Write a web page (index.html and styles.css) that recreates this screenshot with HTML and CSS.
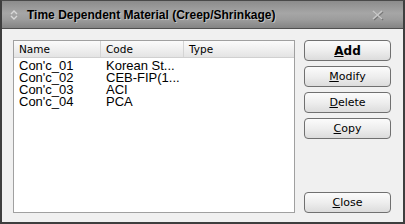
FILE: index.html
```html
<!DOCTYPE html>
<html>
<head>
<meta charset="utf-8">
<link rel="stylesheet" href="styles.css">
</head>
<body>
<div class="window">
  <div class="titlebar">
    <svg class="ticon" width="8" height="10" viewBox="0 0 8 10">
      <path d="M1 4 L4 1 L7 4" fill="none" stroke="#d8d8d8" stroke-width="1.4"/>
      <path d="M1 6 L4 9 L7 6" fill="none" stroke="#d8d8d8" stroke-width="1.4"/>
    </svg>
    <span class="title">Time Dependent Material (Creep/Shrinkage)</span>
    <svg class="close-x" width="11" height="10" viewBox="0 0 11 10">
      <path d="M1 1 L10 9 M10 1 L1 9" stroke="#c8c8c8" stroke-width="1.6"/>
    </svg>
  </div>
  <div class="content">
    <div class="listbox">
      <div class="header">
        <div class="hcell c1">Name</div>
        <div class="hcell c2">Code</div>
        <div class="hcell c3">Type</div>
      </div>
      <div class="rows">
        <div class="row"><span class="c1">Con'c_01</span><span class="c2">Korean St...</span><span class="c3"></span></div>
        <div class="row"><span class="c1">Con'c_02</span><span class="c2">CEB-FIP(1...</span><span class="c3"></span></div>
        <div class="row"><span class="c1">Con'c_03</span><span class="c2">ACI</span><span class="c3"></span></div>
        <div class="row"><span class="c1">Con'c_04</span><span class="c2">PCA</span><span class="c3"></span></div>
      </div>
    </div>
    <div class="buttons">
      <button class="btn bold"><u>A</u>dd</button>
      <button class="btn"><u>M</u>odify</button>
      <button class="btn"><u>D</u>elete</button>
      <button class="btn"><u>C</u>opy</button>
      <div class="spacer"></div>
      <button class="btn"><u>C</u>lose</button>
    </div>
  </div>
</div>
</body>
</html>
```

FILE: styles.css
```css
html, body {
  margin: 0;
  padding: 0;
  background: #f0f0f0;
}
.window {
  width: 405px;
  height: 224px;
  box-sizing: border-box;
  border: 2px solid #3e3e3e;
  border-top: 1px solid #4a4a4a;
  display: flex;
  flex-direction: column;
  background: #f0f0f0;
  font-family: "Liberation Sans", Arial, sans-serif;
}
.titlebar {
  height: 27px;
  border-bottom: 1px solid #505050;
  background: linear-gradient(#8c8c8c, #a6a6a6 45%, #9c9c9c 70%, #848484);
  display: flex;
  align-items: center;
  padding-left: 8px;
  padding-right: 20px;
}
.ticon {
  margin-right: 9px;
}
.title {
  font-weight: bold;
  font-size: 12px;
  color: #000;
  text-shadow: 1px 1px 0 rgba(220,220,220,0.6);
  flex: 1;
}
.close-x {
  filter: drop-shadow(1px 1px 0 rgba(90,90,90,0.6));
}
.content {
  flex: 1;
  display: flex;
  padding: 11px 10px 9px 11px;
  gap: 9px;
}
.listbox {
  width: 282px;
  box-sizing: border-box;
  border: 1px solid #a0a0a0;
  background: #fff;
  display: flex;
  flex-direction: column;
}
.header {
  display: flex;
  height: 16px;
  background: linear-gradient(#fbfbfb, #e4e4e4);
  border-bottom: 1px solid #d0d0d0;
}
.hcell {
  font-family: "DejaVu Sans", sans-serif;
  font-size: 10.5px;
  line-height: 16px;
  color: #000;
  padding-left: 5px;
  box-sizing: border-box;
  border-right: 1px solid #d4d4d4;
}
.c1 { width: 87px; }
.c2 { width: 83px; }
.c3 { width: 110px; }
.hcell.c3 { border-right: none; }
.rows {
  padding-top: 2px;
}
.row {
  display: flex;
  height: 12px;
  font-size: 13px;
  line-height: 12px;
  color: #000;
}
.row span {
  padding-left: 5px;
  box-sizing: border-box;
}
.buttons {
  width: 87px;
  display: flex;
  flex-direction: column;
  gap: 5px;
}
.spacer {
  flex: 1;
}
.btn {
  height: 21px;
  width: 87px;
  margin: 0;
  padding: 0;
  border: 1px solid #707070;
  border-radius: 4px;
  background: linear-gradient(#fbfbfb, #eeeeee 50%, #dcdcdc);
  font-family: "DejaVu Sans", sans-serif;
  font-size: 11px;
  color: #000;
}
.btn.bold {
  font-weight: bold;
  font-size: 12px;
}
```
